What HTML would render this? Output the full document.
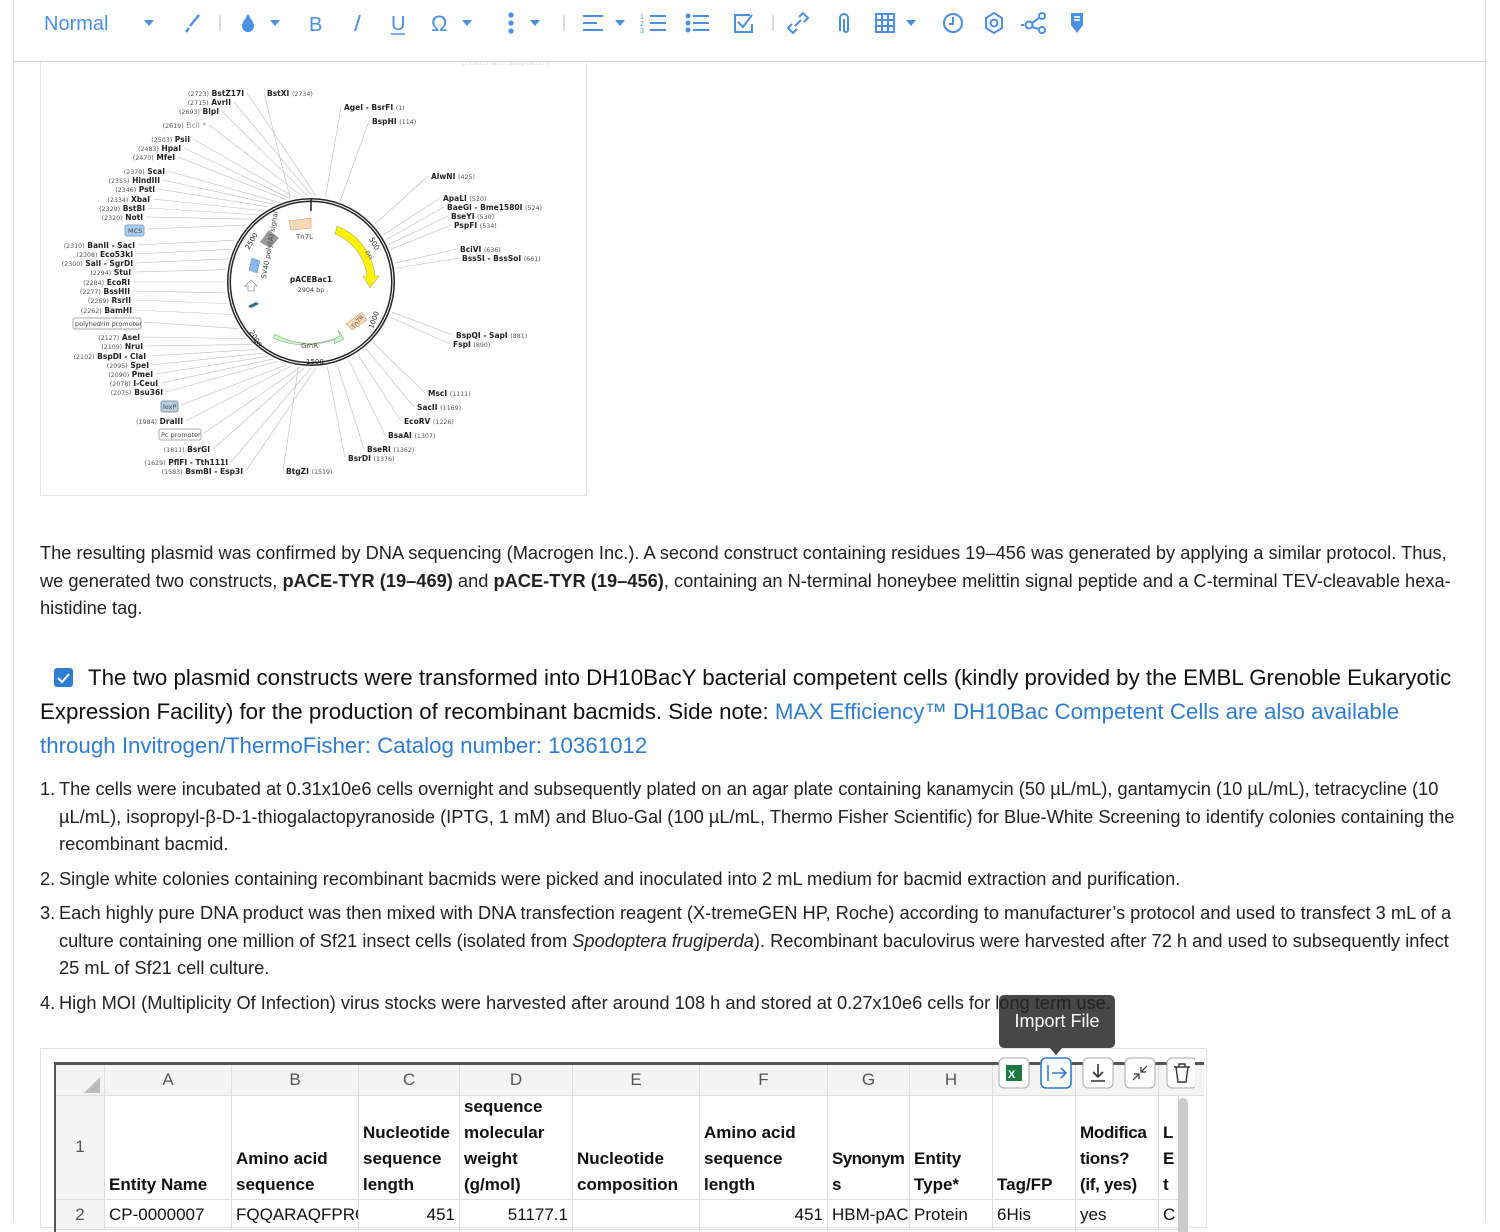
<!DOCTYPE html>
<html><head><meta charset="utf-8"><style>
*{box-sizing:border-box}
body{margin:0;width:1500px;height:1221px;overflow:hidden;background:#fff;font-family:"Liberation Sans",Arial,sans-serif;color:#222;position:relative}
.frame{position:absolute;left:13px;top:0;width:1473px;height:1221px;border-left:1px solid #ddd;border-right:1px solid #ddd}
.tb{position:absolute;left:13px;top:0;width:1473px;height:62px;border-bottom:1px solid #d6d6d6}
.txt{position:absolute;left:40px;width:1420px;font-size:18.25px;line-height:27.5px;color:#222}
.big{font-size:22.3px;line-height:34px}
a{color:#2f7dd1;text-decoration:none}
ol{margin:0;padding:0;list-style:none}
ol li{position:relative;padding-left:19px;margin-bottom:7px}
ol li span.n{position:absolute;left:0}
.tbl{position:absolute;left:40px;top:1048px;width:1167px;height:180px;border:1px solid #e3e3e3}
.grid{position:absolute;left:54px;top:1062px;width:1150px;height:170px;border-top:3px solid #555;border-left:2px solid #555;overflow:hidden;font-family:"Liberation Sans",sans-serif;font-size:17px}
.c{position:absolute;border-right:1px solid #ddd;border-bottom:1px solid #ddd;padding:0 4px;color:#111}
.h{background:#f4f4f4;color:#555;text-align:center;font-size:17px;line-height:30px;top:0;height:31px}
.r1{top:31px;height:104px;font-weight:bold;display:flex;align-items:flex-end;line-height:26px;padding-bottom:1px;white-space:nowrap}
.r2{top:135px;height:30px;line-height:30px;white-space:nowrap;overflow:hidden}
</style></head><body>
<div class="frame"></div>
<div class="tb">
<svg width="1473" height="62" style="position:absolute;left:0;top:0" fill="none" stroke="#4a8fe0" stroke-width="2">
<text x="31" y="30" fill="#4a8fe0" stroke="none" font-size="20" font-family="Liberation Sans">Normal</text>
<path d="M131 20h10l-5 6z" fill="#4a8fe0" stroke="none"/>
<path d="M186 15l-9 11M176 28l-3 4" stroke-width="2.5"/>
<line x1="207" y1="15" x2="207" y2="31" stroke="#ddd"/>
<path d="M235 14c-4 7-6 9-6 12a6 6 0 0 0 12 0c0-3-2-5-6-12z" fill="#4a8fe0" stroke="none"/>
<path d="M257 20h10l-5 6zM449 20h10l-5 6zM517 20h10l-5 6zM602 20h10l-5 6zM893 20h10l-5 6z" fill="#4a8fe0" stroke="none"/>
<text x="296" y="31" fill="#4a8fe0" stroke="none" font-size="20">B</text>
<path d="M347 15l-5 16" />
<text x="378" y="30" fill="#4a8fe0" stroke="none" font-size="20">U</text><path d="M378 34h14" stroke-width="1.5"/>
<text x="418" y="31" fill="#4a8fe0" stroke="none" font-size="22">Ω</text>
<circle cx="498" cy="15" r="1.6" fill="#4a8fe0"/><circle cx="498" cy="23" r="1.6" fill="#4a8fe0"/><circle cx="498" cy="31" r="1.6" fill="#4a8fe0"/>
<line x1="551" y1="15" x2="551" y2="31" stroke="#ddd"/>
<path d="M570 16h20M570 23h14M570 30h20"/>
<path d="M637 16h16M637 23h16M637 30h16"/><text x="627" y="19" font-size="7" fill="#4a8fe0" stroke="none">1</text><text x="627" y="26" font-size="7" fill="#4a8fe0" stroke="none">2</text><text x="627" y="33" font-size="7" fill="#4a8fe0" stroke="none">3</text>
<path d="M680 16h16M680 23h16M680 30h16"/><circle cx="675" cy="16" r="1.5" fill="#4a8fe0"/><circle cx="675" cy="23" r="1.5" fill="#4a8fe0"/><circle cx="675" cy="30" r="1.5" fill="#4a8fe0"/>
<path d="M737 15h-15v17h17v-8M725 22l5 5 9-12"/>
<line x1="760" y1="15" x2="760" y2="31" stroke="#ddd"/>
<path d="M786 17l4-4 5 5-4 4M784 29l-4 4-5-5 4-4M782 26l6-6"/>
<path d="M827 31V18a4 4 0 0 1 8 0v12a2 2 0 0 1-4 0V19"/>
<rect x="863" y="14" width="18" height="18"/><path d="M863 20h18M863 26h18M869 14v18M875 14v18"/>
<circle cx="940" cy="23" r="9"/><path d="M940 17v7h-4"/>
<path d="M981 13l8 5v10l-8 5-8-5V18z"/><circle cx="981" cy="23" r="3.5"/>
<circle cx="1016" cy="25" r="3.5"/><circle cx="1029" cy="16" r="3"/><circle cx="1029" cy="30" r="3"/><path d="M1019 23l7-5M1019 27l7 2M1011 25h-3"/>
<path d="M1058 13h12v12l-6 8-6-8z" fill="#4a8fe0" stroke="none"/><path d="M1061 17h6M1061 20h6" stroke="#fff" stroke-width="1.5"/>
</svg>
</div>

<div style="position:absolute;left:40px;top:62px;width:547px;height:434px;border:1px solid #e6e6e6;border-top:none">
<svg id="pm" width="546" height="434" viewBox="0 0 546 434" font-family="DejaVu Sans,sans-serif" font-size="7.5" fill="#222">
<text x="420" y="3" font-size="7" fill="#ddd">Created with SnapGene®</text>
<g id="lines" stroke="#bbb" stroke-width="0.6"></g>
<g transform="translate(12,2)">
<circle cx="258" cy="218" r="82" fill="none" stroke="#222" stroke-width="4"/>
<circle cx="258" cy="218" r="82" fill="none" stroke="#fff" stroke-width="1"/>
<line x1="258" y1="135" x2="258" y2="147" stroke="#222" stroke-width="1.5"/>
<path d="M236 157l22-3 0 10-20 2z" fill="#f7d9b5" stroke="#c9a27a" stroke-width=".6"/>
<text x="243" y="175" font-size="7" fill="#555">Tn7L</text>
<path d="M284 162a60 60 0 0 1 38 50l4 0-9 12-7-12 4 0a52 52 0 0 0-32-42z" fill="#fff200" stroke="#aa9" stroke-width=".6"/>
<text x="312" y="188" font-size="7" fill="#555" transform="rotate(60 312 188)">ori</text>
<text x="316" y="175" font-size="7" transform="rotate(60 316 175)">500</text>
<path d="M293 260l16-12 5 8-15 10z" fill="#f7d9b5" stroke="#c9a27a" stroke-width=".6"/>
<text x="301" y="265" font-size="6" fill="#555" transform="rotate(-50 301 265)">Tn7R</text>
<text x="320" y="265" font-size="7" transform="rotate(-70 320 265)">1000</text>
<path d="M222 270c20 12 45 12 65 2l-2-6 6 9-10 5 1-5c-20 8-42 8-62-1z" fill="#c9f5c5" stroke="#8a8" stroke-width=".6"/>
<text x="248" y="284" font-size="7" fill="#555">GmR</text>
<text x="253" y="300" font-size="7">1500</text>
<text x="196" y="268" font-size="7" transform="rotate(60 196 268)">2000</text>
<text x="196" y="186" font-size="7" transform="rotate(-60 196 186)">2500</text>
<path d="M207 178l9-12 10 8-9 10z" fill="#999"/>
<path d="M196 206l3-12 8 3-3 12z" fill="#8ab8f0" stroke="#58c" stroke-width=".5"/>
<path d="M192 222l6-6 6 6h-3v5h-6v-5z" fill="#fff" stroke="#777" stroke-width=".6"/>
<path d="M195 242l8-4 3 2-8 4z" fill="#2e6b80"/>
<text x="213" y="215" font-size="7" fill="#444" transform="rotate(-80 213 215)">SV40 poly(A) signal</text>
<text x="258" y="218" font-size="7.5" font-weight="bold" text-anchor="middle">pACEBac1</text>
<text x="258" y="228" font-size="6.5" text-anchor="middle" fill="#444">2904 bp</text>
</g>
<g id="L" text-anchor="end" font-weight="bold"></g>
<g id="R" font-weight="bold"></g>
<g font-size="6.5" fill="#444">
<rect x="84" y="163" width="19" height="11" rx="2" fill="#a9cdf3" stroke="#8ab"/><text x="87" y="171">MCS</text>
<rect x="32" y="256" width="68" height="11" rx="2" fill="#fff" stroke="#aaa"/><text x="34" y="264">polyhedrin promoter</text>
<rect x="120" y="339" width="17" height="11" rx="2" fill="#b3cfe0" stroke="#89a"/><text x="122" y="347">loxP</text>
<rect x="118" y="367" width="42" height="11" rx="2" fill="#fff" stroke="#aaa"/><text x="120" y="375">Pc promoter</text>
</g>
</svg>
</div>
<script>
var L=[["(2723)","BstZ17I",203,34],["(2715)","AvrII",190,43],["(2693)","BlpI",178,52],["(2619)","BclI *",165,66,1],["(2503)","PsiI",149,80],["(2483)","HpaI",140,89],["(2470)","MfeI",134,98],["(2370)","ScaI",124,112],["(2355)","HindIII",119,121],["(2346)","PstI",114,130],["(2334)","XbaI",109,140],["(2329)","BstBI",104,149],["(2320)","NotI",102,158],["","",103,170],["(2310)","BanII  - SacI",94,186],["(2308)","Eco53kI",92,195],["(2300)","SalI  - SgrDI",92,204],["(2294)","StuI",90,213],["(2284)","EcoRI",89,223],["(2277)","BssHII",89,232],["(2269)","RsrII",90,241],["(2262)","BamHI",91,251],["","",100,263],["(2127)","AseI",99,278],["(2109)","NruI",102,287],["(2102)","BspDI  - ClaI",105,297],["(2095)","SpeI",108,306],["(2090)","PmeI",112,315],["(2078)","I-CeuI",117,324],["(2075)","Bsu36I",122,333],["","",137,346],["(1984)","DraIII",142,362],["","",160,374],["(1811)","BsrGI",169,390],["(1629)","PflFI  - Tth111I",187,403],["(1583)","BsmBI  - Esp3I",202,412]];
var R=[["BstXI","(2734)",226,34],["AgeI  - BsrFI","(1)",303,48],["BspHI","(114)",331,62],["AlwNI","(425)",390,117],["ApaLI","(520)",402,139],["BaeGI  - Bme1580I","(524)",406,148],["BseYI","(530)",410,157],["PspFI","(534)",413,166],["BciVI","(636)",419,190],["BssSI  - BssSoI","(661)",421,199],["BspQI  - SapI","(881)",415,276],["FspI","(890)",412,285],["MscI","(1111)",387,334],["SacII","(1169)",376,348],["EcoRV","(1226)",363,362],["BsaAI","(1307)",347,376],["BseRI","(1362)",326,390],["BsrDI","(1376)",307,399],["BtgZI","(1519)",245,412]];
var ns="http://www.w3.org/2000/svg",cx=270,cy=220,r=86;
function ln(x,y,tx,ty){var a=Math.atan2(ty-cy,tx-cx),l=document.createElementNS(ns,"line");l.setAttribute("x1",x);l.setAttribute("y1",y);l.setAttribute("x2",cx+r*Math.cos(a));l.setAttribute("y2",cy+r*Math.sin(a));document.getElementById("lines").appendChild(l);}
L.forEach(function(d){var t=document.createElementNS(ns,"text");t.setAttribute("x",d[2]);t.setAttribute("y",d[3]);if(d[1]){t.innerHTML='<tspan font-weight="normal" font-size="6.3" fill="#555">'+d[0]+'</tspan> '+(d[4]?'<tspan fill="#999" font-weight="normal">'+d[1]+'</tspan>':d[1]);document.getElementById("L").appendChild(t);}
var tx=d[2]+3,ty=d[3]-3;ln(tx,ty,tx+(cx-tx)*0.5+40,ty+(cy-ty)*0.3);});
R.forEach(function(d){var t=document.createElementNS(ns,"text");t.setAttribute("x",d[2]);t.setAttribute("y",d[3]);t.innerHTML=d[0]+'  <tspan font-weight="normal" font-size="6.3" fill="#555">'+d[1]+'</tspan>';document.getElementById("R").appendChild(t);
var tx=d[2]-3,ty=d[3]-3;ln(tx,ty,tx,ty);});
</script>

<div class="txt" style="top:539px">The resulting plasmid was confirmed by DNA sequencing (Macrogen Inc.). A second construct containing residues 19–456 was generated by applying a similar protocol. Thus, we generated two constructs, <b>pACE-TYR (19–469)</b> and <b>pACE-TYR (19–456)</b>, containing an N-terminal honeybee melittin signal peptide and a C-terminal TEV-cleavable hexa-histidine tag.</div>

<div class="txt big" style="top:661px;color:#111;width:1418px"><span style="display:inline-block;width:19px;height:19px;background:#2f7dd1;border-radius:3px;margin:0 15px 0 14px;vertical-align:-2px;position:relative"><svg width="19" height="19" style="position:absolute;left:0;top:0"><path d="M4 10l4 4 7-8" stroke="#fff" stroke-width="2" fill="none"/></svg></span>The two plasmid constructs were transformed into DH10BacY bacterial competent cells (kindly provided by the EMBL Grenoble Eukaryotic Expression Facility) for the production of recombinant bacmids. Side note: <a>MAX Efficiency™ DH10Bac Competent Cells are also available through Invitrogen/ThermoFisher: Catalog number: 10361012</a></div>

<div class="txt" style="top:775px;color:#222;z-index:5"><ol>
<li><span class="n">1.</span>The cells were incubated at 0.31x10e6 cells overnight and subsequently plated on an agar plate containing kanamycin (50 µL/mL), gantamycin (10 µL/mL), tetracycline (10 µL/mL), isopropyl-β-D-1-thiogalactopyranoside (IPTG, 1 mM) and Bluo-Gal (100 µL/mL, Thermo Fisher Scientific) for Blue-White Screening to identify colonies containing the recombinant bacmid.</li>
<li><span class="n">2.</span>Single white colonies containing recombinant bacmids were picked and inoculated into 2 mL medium for bacmid extraction and purification.</li>
<li><span class="n">3.</span>Each highly pure DNA product was then mixed with DNA transfection reagent (X-tremeGEN HP, Roche) according to manufacturer’s protocol and used to transfect 3 mL of a culture containing one million of Sf21 insect cells (isolated from <i>Spodoptera frugiperda</i>). Recombinant baculovirus were harvested after 72 h and used to subsequently infect 25 mL of Sf21 cell culture.</li>
<li><span class="n">4.</span>High MOI (Multiplicity Of Infection) virus stocks were harvested after around 108 h and stored at 0.27x10e6 cells for long term use.</li>
</ol></div>

<div class="tbl"></div>
<div class="grid">
<div class="c h" style="left:0;width:49px"><svg width="16" height="16" style="position:absolute;left:28px;top:12px"><path d="M16 0V16H0z" fill="#bbb"/></svg></div>
<div class="c h" style="left:49px;width:127px">A</div><div class="c h" style="left:176px;width:127px">B</div><div class="c h" style="left:303px;width:101px">C</div><div class="c h" style="left:404px;width:113px">D</div><div class="c h" style="left:517px;width:127px">E</div><div class="c h" style="left:644px;width:128px">F</div><div class="c h" style="left:772px;width:82px">G</div><div class="c h" style="left:854px;width:83px">H</div><div class="c h" style="left:937px;width:83px"></div><div class="c h" style="left:1020px;width:83px"></div><div class="c h" style="left:1103px;width:60px"></div>
<div class="c r1" style="left:0;width:49px;align-items:center;justify-content:center;font-weight:normal;background:#f4f4f4;color:#555">1</div>
<div class="c r1" style="left:49px;width:127px">Entity Name</div><div class="c r1" style="left:176px;width:127px">Amino acid<br>sequence</div><div class="c r1" style="left:303px;width:101px">Nucleotide<br>sequence<br>length</div><div class="c r1" style="left:404px;width:113px">sequence<br>molecular<br>weight<br>(g/mol)</div><div class="c r1" style="left:517px;width:127px">Nucleotide<br>composition</div><div class="c r1" style="left:644px;width:128px">Amino acid<br>sequence<br>length</div><div class="c r1" style="left:772px;width:82px;letter-spacing:-0.6px">Synonym<br>s</div><div class="c r1" style="left:854px;width:83px">Entity<br>Type*</div><div class="c r1" style="left:937px;width:83px">Tag/FP</div><div class="c r1" style="left:1020px;width:83px;overflow:hidden;letter-spacing:-0.3px">Modifica<br>tions?<br>(if, yes)</div><div class="c r1" style="left:1103px;width:20px;overflow:hidden">L<br>E<br>t</div>
<div class="c r2" style="left:0;width:49px;text-align:center;background:#f4f4f4;color:#555">2</div>
<div class="c r2" style="left:49px;width:127px">CP-0000007</div><div class="c r2" style="left:176px;width:127px">FQQARAQFPRQ(</div><div class="c r2" style="left:303px;width:101px;text-align:right">451</div><div class="c r2" style="left:404px;width:113px;text-align:right">51177.1</div><div class="c r2" style="left:517px;width:127px"></div><div class="c r2" style="left:644px;width:128px;text-align:right">451</div><div class="c r2" style="left:772px;width:82px">HBM-pACE</div><div class="c r2" style="left:854px;width:83px">Protein</div><div class="c r2" style="left:937px;width:83px">6His</div><div class="c r2" style="left:1020px;width:83px">yes</div><div class="c r2" style="left:1103px;width:20px">C</div>
<div style="position:absolute;left:1122px;top:33px;width:10px;height:140px;background:#ccc;border-radius:5px"></div>
</div>
<svg width="200" height="40" style="position:absolute;left:995px;top:1056px" fill="none" stroke-width="1.6">
<rect x="4" y="2" width="30" height="30" rx="5" fill="#fff" stroke="#aaa" stroke-width="1"/><rect x="11" y="9" width="16" height="16" fill="#1d7a45" stroke="none"/><text x="13" y="22" fill="#fff" stroke="none" font-size="11" font-weight="bold">X</text>
<rect x="46" y="2" width="30" height="30" rx="5" fill="#fff" stroke="#2f7dd1"/><path d="M53 9v16M57 17h14M66 12l5 5-5 5" stroke="#2f7dd1"/>
<rect x="88" y="2" width="30" height="30" rx="5" fill="#fff" stroke="#aaa" stroke-width="1"/><path d="M103 8v13M98 16l5 5 5-5M96 25h14" stroke="#333"/>
<rect x="130" y="2" width="30" height="30" rx="5" fill="#fff" stroke="#aaa" stroke-width="1"/><path d="M138 24l6-6M139 18h5v5M152 10l-6 6M146 11v5h5" stroke="#333" stroke-width="1.2"/>
<rect x="172" y="2" width="30" height="30" rx="5" fill="#fff" stroke="#aaa" stroke-width="1"/><path d="M179 11h16M184 11v-3h6v3M181 11l2 15h8l2-15" stroke="#333" stroke-width="1.4"/>
</svg>
<div style="position:absolute;left:999px;top:995px;width:116px;height:53px;background:#474747;border-radius:5px;color:#fff;font-size:18px;line-height:52px;text-align:center;z-index:1">Import File</div>
<div style="position:absolute;left:1049px;top:1047px;width:0;height:0;border-left:7px solid transparent;border-right:7px solid transparent;border-top:8px solid #474747"></div>
</body></html>
